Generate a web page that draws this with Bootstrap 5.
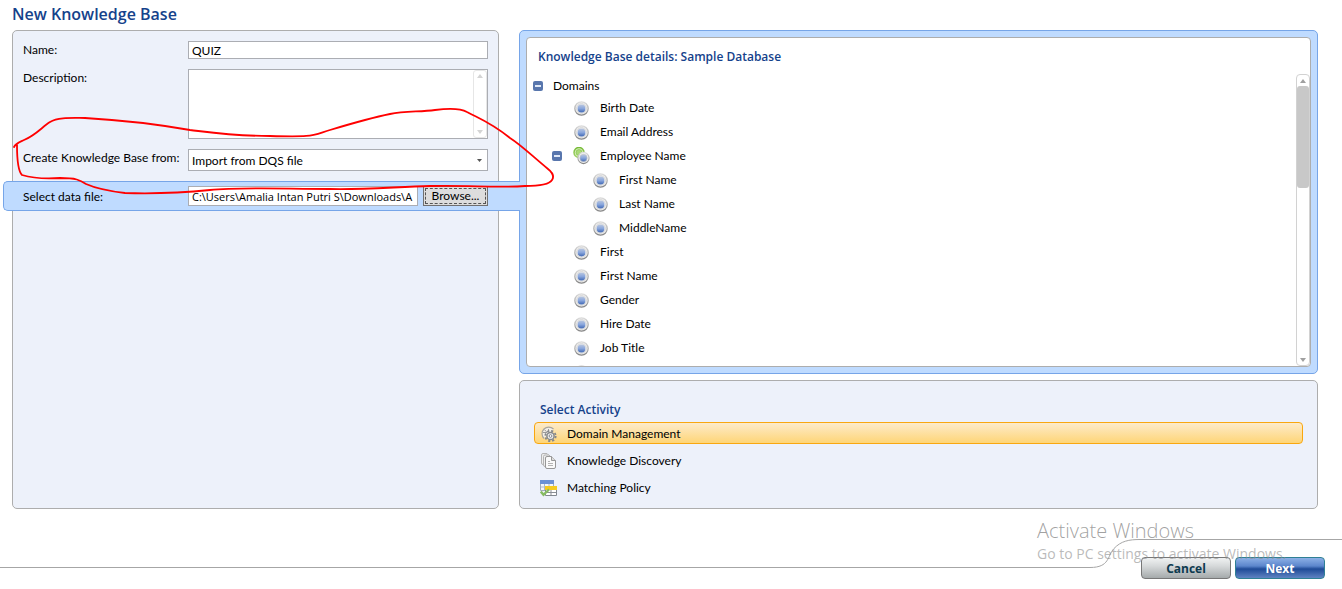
<!DOCTYPE html>
<html lang="en">
<head>
<meta charset="utf-8">
<meta name="viewport" content="width=device-width, initial-scale=1">
<title>New Knowledge Base</title>
<link href="https://cdn.jsdelivr.net/npm/bootstrap@5.3.0/dist/css/bootstrap.min.css" rel="stylesheet">
<style>
  :root { --navy: #15428b; --pane: #edf1fa; --edge: #adadad; --sky: #bfdbff; --sky-edge: #76a5e8; }
  body { font-family: Lato, "Open Sans", sans-serif; font-size: 12px; line-height: 18px; color: #000; background: #fff; overflow-x: hidden; }
  .page-title { font: 600 16px/20px "Open Sans", sans-serif; color: var(--navy); padding: 4px 12px 6px; }
  .section-title { font: 600 12px/20px "Open Sans", sans-serif; color: var(--navy); }
  .workspace { padding: 0 24px 0 12px; gap: 20px; }
  .pane { background: var(--pane); border: 1px solid var(--edge); border-radius: 5px; }
  .form-pane { flex: 0 0 487px; padding: 10px; }
  .field { display: flex; margin-bottom: 10px; }
  .field > label { flex: 0 0 165px; width: 165px; white-space: nowrap; }
  .field-box { position: relative; flex: 1; min-width: 0; }
  .ctl { display: block; width: 100%; border: 1px solid #abadb3; border-radius: 0; background: #fff; color: #000; padding: 0 3px; font: inherit; line-height: 16px; outline: 0; }
  input.ctl { height: 18px; }
  textarea.ctl { height: 70px; resize: none; overflow: hidden; }
  select.ctl { height: 22px; padding-top: 1px; line-height: 20px; appearance: none; }
  .select-arrow { position: absolute; right: 6px; top: 10px; pointer-events: none; }
  .area-scroll { position: absolute; right: 1px; top: 1px; bottom: 1px; width: 14px; border: 1px solid #e6e6e6; border-radius: 3px; background: #fff; padding: 3px 0; }
  .link-band { position: relative; z-index: 2; height: 30px; margin: 0 -32px 0 -20px; padding: 4px 32px 4px 19px; background: var(--sky); border: 1px solid var(--sky-edge); border-right: 0; border-radius: 5px 0 0 5px; }
  .link-band label { flex: 0 0 165px; line-height: 22px; }
  .link-band input.ctl { height: 20px; padding-right: 0; font: 11px/16px "Open Sans", sans-serif; }
  .browse { flex: 0 0 65px; height: 20px; margin-left: 5px; padding: 0; border: 1px solid #707070; background: #ddd; color: #000; line-height: 18px; outline: 1px dashed #555; outline-offset: -3px; }
  .details-pane { background: var(--sky); border: 1px solid var(--sky-edge); border-radius: 5px; padding: 6px; margin-bottom: 6px; }
  .details-inner { background: #fff; border: 1px solid var(--edge); border-radius: 4px; }
  .details-inner .section-title { padding: 9px 11px 7px; }
  .tree-view { height: 292px; overflow: hidden; }
  .tree-view ul { list-style: none; margin: 0; padding: 0; }
  .node { display: flex; align-items: center; height: 24px; }
  .node-root { height: 22px; padding: 2px 0 0 6px; gap: 10px; }
  .level-1 { padding-left: 47px; gap: 10px; }
  .level-1.open-node { padding-left: 25px; }
  .level-2 { padding-left: 66px; gap: 10px; }
  .toggle { width: 10px; height: 10px; border: 0; border-radius: 2px; background: #5876ad; padding: 0; display: flex; align-items: center; justify-content: center; }
  .toggle::before { content: ""; width: 6px; height: 2px; background: #dfe8f6; }
  .node svg { flex: none; }
  .tree-scroll { width: 14px; flex: none; border: 1px solid #d2d2d2; border-radius: 4px; background: #fff; }
  .tree-scroll svg { margin: 4px 0 3px; }
  .thumb { width: 12px; height: 102px; border-radius: 3px; background: #c8c8c8; }
  .activity-pane { padding: 19px 14px 10px; }
  .activity-pane .section-title { padding: 0 6px 2px; }
  .activity-list { display: grid; row-gap: 5px; }
  .activity { display: flex; align-items: center; gap: 10px; width: 100%; height: 22px; padding: 2px 5px 0; border: 1px solid transparent; border-radius: 4px; background: none; color: #000; text-align: left; }
  .activity.active { border-color: #f9a70f; background: linear-gradient(#fdebca, #fed577); }
  .foot { position: relative; margin-top: 30px; height: 50px; }
  .foot-low { flex: 1; height: 29px; border-bottom: 1px solid #a6a6a6; }
  .foot-high { width: 202px; border-top: 1px solid #a6a6a6; padding: 17px 17px 0 0; }
  .cmd { width: 90px; height: 22px; padding: 1px 0 0; border-radius: 4px; font: 700 12px/20px "Open Sans", sans-serif; }
  .cmd-cancel { border: 1px solid #777; color: #0d3a4f; background: linear-gradient(#f0f2f2, #d6d9da 40%, #a5aaab); }
  .cmd-next { border: 1px solid #2f8094; color: #fff; background: linear-gradient(#8cb0e6, #5c86cc 40%, #1f4b97 55%, #5f83c2); }
  .os-notice { position: absolute; right: 53px; top: -21px; width: 252px; color: rgba(140,140,140,.6); white-space: nowrap; pointer-events: none; }
  .os-notice p { margin: 0; font: 14px/20px "Open Sans", sans-serif; }
  .os-notice p:first-child { font-size: 20px; font-weight: 300; line-height: 26px; color: rgba(120,120,120,.7); }
  .pen-mark { position: absolute; left: 0; top: 100px; z-index: 5; pointer-events: none; }
</style>
<script src="https://cdn.jsdelivr.net/npm/bootstrap@5.3.0/dist/js/bootstrap.bundle.min.js"></script>
</head>
<body>
<svg width="0" height="0" class="position-absolute" aria-hidden="true">
  <defs>
    <linearGradient id="ring" x2="0" y2="1"><stop stop-color="#dcdcdc"/><stop offset="1" stop-color="#858585"/></linearGradient>
    <linearGradient id="ball" x2="0" y2="1"><stop stop-color="#b9c6df"/><stop offset=".5" stop-color="#89a6dc"/><stop offset="1" stop-color="#4169b5"/></linearGradient>
    <linearGradient id="leaf" x2="0" y2="1"><stop stop-color="#77bb38"/><stop offset="1" stop-color="#a5d46b"/></linearGradient>
    <symbol id="domain" viewBox="0 0 16 16">
      <circle cx="7.500" cy="8.500" r="6.700" fill="#f0f0f0" stroke="url(#ring)" stroke-width="1.200"/>
      <circle cx="7.500" cy="8.500" r="4.700" fill="#fff" stroke="#c4c4c4" stroke-width=".8"/>
      <circle cx="7.500" cy="8.500" r="3.900" fill="url(#ball)"/>
    </symbol>
    <symbol id="composite" viewBox="0 0 18 18">
      <circle cx="7" cy="5.500" r="5" fill="#d8efbd" stroke="url(#leaf)" stroke-width="1.500"/>
      <circle cx="7" cy="5.500" r="3" fill="#a9d977" stroke="#7fbd45" stroke-width=".6"/>
      <circle cx="11.500" cy="11" r="5.600" fill="#f2f2f2" stroke="url(#ring)" stroke-width="1.100"/>
      <circle cx="11.500" cy="11" r="3.700" fill="url(#ball)" stroke="#c4c4c4" stroke-width=".6"/>
    </symbol>
  </defs>
</svg>

<h1 class="page-title m-0">New Knowledge Base</h1>

<main class="workspace d-flex">
  <form class="pane form-pane">
    <div class="field"><label for="kb-name">Name:</label>
      <div class="field-box"><input class="ctl" id="kb-name" type="text" value="QUIZ"></div></div>
    <div class="field"><label for="kb-desc">Description:</label>
      <div class="field-box"><textarea class="ctl" id="kb-desc"></textarea>
        <div class="area-scroll d-flex flex-column justify-content-between align-items-center">
          <svg width="6" height="4"><path d="M0 4 3 0l3 4z" fill="#d4d4d4"/></svg>
          <svg width="6" height="4"><path d="M0 0h6L3 4z" fill="#d4d4d4"/></svg>
        </div></div></div>
    <div class="field"><label for="kb-source">Create Knowledge Base from:</label>
      <div class="field-box"><select class="ctl" id="kb-source"><option>Import from DQS file</option></select>
        <svg class="select-arrow" width="5" height="3"><path d="M0 0h5L2.500 3z" fill="#555"/></svg></div></div>
    <div class="link-band d-flex">
      <label for="kb-file">Select data file:</label>
      <div class="field-box"><input class="ctl" id="kb-file" type="text" value="C:\Users\Amalia Intan Putri S\Downloads\A"></div>
      <button type="button" class="browse">Browse...</button>
    </div>
  </form>

  <div class="flex-grow-1">
    <section class="details-pane">
      <div class="details-inner">
        <h2 class="section-title m-0">Knowledge Base details: Sample Database</h2>
        <div class="d-flex">
          <div class="tree-view flex-grow-1">
            <ul>
              <li class="node node-root"><button class="toggle" aria-label="Collapse Domains"></button>Domains</li>
              <li class="node level-1"><svg width="16" height="16"><use href="#domain"/></svg>Birth Date</li>
              <li class="node level-1"><svg width="16" height="16"><use href="#domain"/></svg>Email Address</li>
              <li class="node level-1 open-node"><button class="toggle" aria-label="Collapse Employee Name"></button><svg width="18" height="18"><use href="#composite"/></svg>Employee Name</li>
              <li class="node level-2"><svg width="16" height="16"><use href="#domain"/></svg>First Name</li>
              <li class="node level-2"><svg width="16" height="16"><use href="#domain"/></svg>Last Name</li>
              <li class="node level-2"><svg width="16" height="16"><use href="#domain"/></svg>MiddleName</li>
              <li class="node level-1"><svg width="16" height="16"><use href="#domain"/></svg>First</li>
              <li class="node level-1"><svg width="16" height="16"><use href="#domain"/></svg>First Name</li>
              <li class="node level-1"><svg width="16" height="16"><use href="#domain"/></svg>Gender</li>
              <li class="node level-1"><svg width="16" height="16"><use href="#domain"/></svg>Hire Date</li>
              <li class="node level-1"><svg width="16" height="16"><use href="#domain"/></svg>Job Title</li>
              <li class="node level-1"><svg width="16" height="16"><use href="#domain"/></svg></li>
            </ul>
          </div>
          <div class="tree-scroll d-flex flex-column align-items-center">
            <svg width="6" height="4"><path d="M0 4 3 0l3 4z" fill="#a0a0a0"/></svg>
            <div class="thumb"></div>
            <svg class="mt-auto" width="6" height="4"><path d="M0 0h6L3 4z" fill="#a0a0a0"/></svg>
          </div>
        </div>
      </div>
    </section>

    <section class="pane activity-pane">
      <h2 class="section-title m-0">Select Activity</h2>
      <div class="activity-list">
        <button class="activity active">
          <svg width="17" height="17" viewBox="0 0 17 17"><path d="M13.500 3A6.500 6.500 0 1 0 4 12.500" fill="#f3efe8" stroke="#aaa69e" stroke-width="1.200"/><path d="M3 6.500h4M4.500 4l2 1.500M8.500 3v2" stroke="#999"/><g fill="none" stroke="#85888c"><circle cx="10.500" cy="10" r="3.600" fill="#f1f1f1" stroke-width="1.500"/><circle cx="10.500" cy="10" r="5.200" stroke-width="1.800" stroke-dasharray="2.200 1.884"/><circle cx="10.500" cy="10" r="1.400" fill="#fff"/></g></svg>
          Domain Management</button>
        <button class="activity">
          <svg width="17" height="17" viewBox="0 0 17 17"><g fill="#eee" stroke="#b4b4b4"><path d="M1.500 2q0-1.500 1.500-1.500h4l2 2v9H3q-1.500 0-1.500-1.500z"/><path d="M3.500 3.500q0-1.500 1.500-1.500h4l3 3v8.500H5q-1.500 0-1.500-1.500z"/><path d="M5.500 5q0-1.500 1.500-1.500h4.500L15.500 7.500V14q0 1.500-1.500 1.500H7q-1.500 0-1.500-1.500z" fill="#fafafa" stroke="#979797"/><path d="M11.500 3.500v4h4" fill="#ddd" stroke="#979797"/></g><path d="M8 8.500h2M8 10.500h5M8 12.500h5" stroke="#b4b4b4"/></svg>
          Knowledge Discovery</button>
        <button class="activity">
          <svg width="17" height="17" viewBox="0 0 17 17"><path d="M.5 1.500h13v9H.5z" fill="#f3f6fa" stroke="#a3acb8"/><path d="M0 0h14v4H0z" fill="#6c91d4"/><path d="M1 7h12M4.500 4v6M9 4v3" stroke="#b0b8c4"/><path d="M5.500 9.500h11v6h-11z" fill="#fff" stroke="#81878f"/><path d="M5 6h12v4H5z" fill="#f6cb20"/><path d="M6 12.500h10M11 10v5" stroke="#8b8f96"/><path d="M.8 11.500 3.500 14.800 9 9.500" fill="none" stroke="#86bb62" stroke-width="2.400"/></svg>
          Matching Policy</button>
      </div>
    </section>
  </div>
</main>

<footer class="foot d-flex">
  <div class="foot-low"></div>
  <svg width="50" height="30" viewBox="0 0 50 30" fill="none"><path d="M0 28.500C20 28.500 17 17 24 9.500C31 2 39 .5 50 .5" stroke="#a6a6a6"/></svg>
  <div class="foot-high d-flex gap-1 align-items-start justify-content-end">
    <button class="cmd cmd-cancel">Cancel</button>
    <button class="cmd cmd-next">Next</button>
  </div>
  <div class="os-notice"><p>Activate Windows</p><p>Go to PC settings to activate Windows.</p></div>
</footer>

<svg class="pen-mark" width="560" height="100" viewBox="0 100 560 100" fill="none" aria-hidden="true">
  <path d="M14 147C16 143 20 142 24 140C36 135 42 127 50 122C58 117 72 118 85 118C120 120 150 123 190 130C215 133 235 136 270 136C315 137 310 136 330 130C350 124 375 117 390 114C405 111 420 112 435 110C450 108 460 108 467 112C480 119 490 122 510 138C521 145 530 154 548 169C553 173 554 177 552 180C549 185 535 186 525 186C495 188 470 185 430 186C395 187 360 190 330 189C285 189 240 187 210 190C180 193 155 194 125 193C108 191 95 188 86 184C80 180 76 178 60 178C45 179 32 178 22 175C18 171 17 160 17 145" stroke="#f00" stroke-width="1.800" stroke-linecap="round" stroke-linejoin="round"/>
</svg>
</body>
</html>
